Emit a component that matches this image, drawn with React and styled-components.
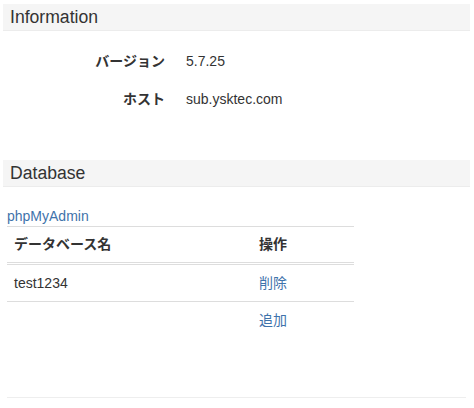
import styled, { createGlobalStyle } from 'styled-components';

const Global = createGlobalStyle`
  body {
    margin: 0;
    background: #fff;
    font-family: "Liberation Sans", "Noto Sans CJK JP", sans-serif;
    font-size: 14px;
    color: #333;
  }
`;

const Page = styled.div`
  padding: 4px 4px 0 3px;
`;

const SectionTitle = styled.h2`
  margin: 0;
  height: 26px;
  line-height: 26px;
  padding-left: 7px;
  background: #f5f5f5;
  border-bottom: 1px solid #ececec;
  font-size: 17.6px;
  font-weight: normal;
  color: #333;
`;

const InfoList = styled.dl`
  margin: 20px 0 51px;
  display: grid;
  grid-template-columns: 162px 1fr;
  column-gap: 21px;
  row-gap: 18px;
`;

const Term = styled.dt`
  text-align: right;
  font-weight: bold;
  line-height: 20px;
`;

const Desc = styled.dd`
  margin: 0;
  line-height: 20px;
`;

const DbBody = styled.div`
  padding: 19px 0 0 4px;
`;

const Link = styled.a`
  color: #3f73ab;
  text-decoration: none;
  font-size: 14px;
  cursor: pointer;
`;

const LinkLine = styled.div`
  line-height: 20px;
  height: 20px;
`;

const Table = styled.table`
  width: 347px;
  border-collapse: collapse;
`;

const Th = styled.th`
  text-align: left;
  padding: 7px 7px 8px;
  line-height: 20px;
  border-top: 1px solid #ddd;
  border-bottom: 3px double #ddd;
  width: ${p => p.$w || 'auto'};
`;

const Td = styled.td`
  padding: 8px 7px;
  line-height: 20px;
  border-top: ${p => (p.$first ? '0' : '1px solid #ddd')};
`;

const Rule = styled.hr`
  margin: 59px 4px 0 4px;
  border: 0;
  border-top: 1px solid #eee;
`;

export default function App() {
  return (
    <Page>
      <Global />
      <SectionTitle>Information</SectionTitle>
      <InfoList>
        <Term>バージョン</Term>
        <Desc>5.7.25</Desc>
        <Term>ホスト</Term>
        <Desc>sub.ysktec.com</Desc>
      </InfoList>
      <SectionTitle>Database</SectionTitle>
      <DbBody>
        <LinkLine>
          <Link>phpMyAdmin</Link>
        </LinkLine>
        <Table>
          <thead>
            <tr>
              <Th $w="231px">データベース名</Th>
              <Th>操作</Th>
            </tr>
          </thead>
          <tbody>
            <tr>
              <Td $first>test1234</Td>
              <Td $first><Link>削除</Link></Td>
            </tr>
            <tr>
              <Td></Td>
              <Td><Link>追加</Link></Td>
            </tr>
          </tbody>
        </Table>
      </DbBody>
      <Rule />
    </Page>
  );
}
